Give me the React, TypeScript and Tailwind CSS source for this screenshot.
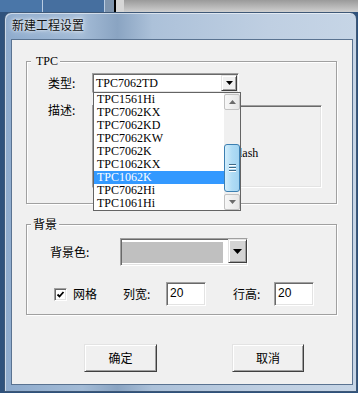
import type { ReactNode } from 'react'

// Win7 "新建工程设置" dialog with the TPC type combo dropped open.

const SERIF = "font-['Liberation_Serif','Noto_Sans_CJK_SC',serif]"
const CJK = "font-['Noto_Sans_CJK_SC','Liberation_Sans',sans-serif]"
const SUNKEN =
  'border border-t-[#a0a0a0] border-l-[#a0a0a0] border-b-white border-r-white shadow-[inset_1px_1px_0_#696969,inset_-1px_-1px_0_#e3e3e3]'
const RAISED =
  'border border-t-[#e3e3e3] border-l-[#e3e3e3] border-b-[#404040] border-r-[#404040] shadow-[inset_1px_1px_0_#fff,inset_-1px_-1px_0_#a0a0a0]'

const models = [
  'TPC1561Hi',
  'TPC7062KX',
  'TPC7062KD',
  'TPC7062KW',
  'TPC7062K',
  'TPC1062KX',
  'TPC1062K',
  'TPC7062Hi',
  'TPC1061Hi',
]
const selected = 'TPC1062K'

function GroupBox({
  title,
  titleClass = '',
  className = '',
  children,
}: {
  title: string
  titleClass?: string
  className?: string
  children: ReactNode
}) {
  return (
    <div
      className={`relative ml-[14px] w-[311px] border border-[#a0a0a0] shadow-[1px_1px_0_#fff,inset_1px_1px_0_#fff] ${className}`}
    >
      <span
        className={`absolute -top-[8px] left-[4px] bg-[#f0f0f0] px-[2px] leading-[14px] text-black ${titleClass}`}
      >
        {title}
      </span>
      {children}
    </div>
  )
}

function ScrollArrow({ up }: { up?: boolean }) {
  return (
    <div className="flex h-[16px] w-[16px] items-center justify-center rounded-[2px] border border-[#c2c2c2] bg-[linear-gradient(90deg,#f7f7f7,#e6e6e6)]">
      <svg width="7" height="4" viewBox="0 0 7 4">
        <path d={up ? 'M0 4h7L3.5 0z' : 'M0 0h7L3.5 4z'} fill="#6b6b6b" />
      </svg>
    </div>
  )
}

function DropList() {
  return (
    <div className="absolute left-0 top-full z-10 flex h-[119px] w-[148px] border border-[#646464] bg-white">
      <div className={`w-[130px] ${SERIF} text-[12px] leading-[13px]`}>
        {models.map((m) => (
          <div
            key={m}
            className={`h-[13px] pl-[3px] ${m === selected ? 'bg-[#3399ff] text-white' : 'text-black'}`}
          >
            {m}
          </div>
        ))}
      </div>
      <div className="flex w-[16px] flex-col bg-[#f0f0f0]">
        <div className="mt-[1px]">
          <ScrollArrow up />
        </div>
        <div className="mt-[34px] flex h-[48px] w-[16px] flex-col items-center justify-center gap-[1px] rounded-[3px] border border-[#3c7fb1] bg-[linear-gradient(90deg,#d3eefc,#b0dcf5_50%,#a3d4f1)]">
          <div className="h-[2px] w-[7px] border-t border-[#3e6886] bg-white" />
          <div className="h-[2px] w-[7px] border-t border-[#3e6886] bg-white" />
          <div className="h-[2px] w-[7px] border-t border-[#3e6886] bg-white" />
        </div>
        <div className="mt-[2px]">
          <ScrollArrow />
        </div>
      </div>
    </div>
  )
}

function NumField({ value }: { value: string }) {
  return (
    <div
      className={`flex h-[24px] w-[40px] items-center bg-white pb-[2px] pl-[3px] font-['Liberation_Sans',sans-serif] text-[12px] text-black ${SUNKEN}`}
    >
      {value}
    </div>
  )
}

export default function App() {
  return (
    <div className={`h-[393px] w-[358px] overflow-hidden bg-[#2f527c] ${CJK}`}>
      {/* desktop behind the dialog */}
      <div className="flex h-[12px]">
        <div className="w-[43px] border-r border-[#b9cce2] bg-[#4a76a8]" />
        <div className="w-[62px] border-r border-[#b9cce2] bg-[#466f9f]" />
        <div className="w-[9px] bg-[#7f95ae]" />
        <div className="w-[2px] bg-black" />
        <div className="w-[8px] bg-[#d6d6d6]" />
        <div className="flex-1 bg-[linear-gradient(180deg,#9a9a9a,#cfcfcf)]" />
      </div>

      {/* window frame */}
      <div className="ml-[4px] flex h-[380px] w-[353px] flex-col rounded-t-[7px] border border-[#3e5877] bg-[linear-gradient(90deg,#8eabcd_0%,#a3bbd6_22%,#8aa4c2_32%,#acc1d9_42%,#bfcfe2_75%,#c6d5e6_100%)] shadow-[inset_1px_1px_0_rgba(255,255,255,0.55)]">
        <div className="flex h-[26px] items-center pb-[3px] pl-[7px] text-[12px] text-[#111] [text-shadow:0_0_7px_#fff,0_0_3px_#fff]">
          新建工程设置
        </div>

        {/* client area */}
        <div className="ml-[6px] h-[346px] w-[342px] border border-[#5a7391] bg-[#f0f0f0] text-[12px] text-black">
          <GroupBox title="TPC" titleClass={`${SERIF} text-[12px] pl-[5px]`} className="mt-[21px] h-[143px]">
            <div className="pl-[21px] pt-[11px]">
              <div className="flex h-[20px] items-center">
                <span className="w-[44px]">类型:</span>
                <div className={`relative h-[20px] w-[147px] bg-white ${SUNKEN}`}>
                  <div className="flex h-full p-[1px]">
                    <span className={`flex-1 pl-[2px] ${SERIF} text-[12px] leading-[16px]`}>TPC7062TD</span>
                    <div className={`flex h-[16px] w-[16px] items-center justify-center bg-[#f0f0f0] ${RAISED}`}>
                      <svg width="7" height="4" viewBox="0 0 7 4">
                        <path d="M0 0h7L3.5 4z" fill="#000" />
                      </svg>
                    </div>
                  </div>
                  <DropList />
                </div>
              </div>
              <div className="mt-[12px] flex items-start">
                <span className="-mt-[2px] w-[44px] leading-[14px]">描述:</span>
                <div className={`h-[83px] w-[230px] overflow-hidden bg-[#f0f0f0] pl-[5px] pt-[41px] ${SUNKEN}`}>
                  <div className={`whitespace-nowrap ${SERIF} text-[12px] leading-[13px]`}>
                    TPC7062TD 128M NAND Flash
                  </div>
                </div>
              </div>
            </div>
          </GroupBox>

          <GroupBox title="背景" titleClass="text-[12px]" className="mt-[20px] h-[91px]">
            <div className="pl-[23px] pt-[13px]">
              <div className="flex items-center">
                <span className="w-[70px]">背景色:</span>
                <div className={`flex h-[28px] w-[128px] bg-white ${SUNKEN}`}>
                  <div className="mb-[2px] ml-[1px] mt-[3px] w-[101px] bg-[#c0c0c0]" />
                  <div className={`ml-auto flex h-[24px] w-[19px] items-center justify-center bg-[#d4d4d4] ${RAISED}`}>
                    <svg width="9" height="5" viewBox="0 0 9 5">
                      <path d="M0 0h9L4.5 5z" fill="#000" />
                    </svg>
                  </div>
                </div>
              </div>
              <div className="mt-[16px] flex h-[24px] items-center">
                <div className={`ml-[4px] flex h-[13px] w-[13px] items-center justify-center bg-white ${SUNKEN}`}>
                  <svg width="9" height="9" viewBox="0 0 9 9">
                    <path d="M1.5 4.5l2 2 4-4.5" fill="none" stroke="#000" strokeWidth="1.8" />
                  </svg>
                </div>
                <span className="ml-[6px] w-[50px]">网格</span>
                <span className="w-[43px]">列宽:</span>
                <NumField value="20" />
                <span className="ml-[27px] w-[41px]">行高:</span>
                <NumField value="20" />
              </div>
            </div>
          </GroupBox>

          <div className="ml-[72px] mt-[29px] flex">
            <button type="button" className={`h-[28px] w-[73px] bg-[#f0f0f0] text-[12px] ${RAISED}`}>
              确定
            </button>
            <button type="button" className={`ml-[75px] h-[28px] w-[72px] bg-[#f0f0f0] text-[12px] ${RAISED}`}>
              取消
            </button>
          </div>
        </div>
      </div>
    </div>
  )
}
